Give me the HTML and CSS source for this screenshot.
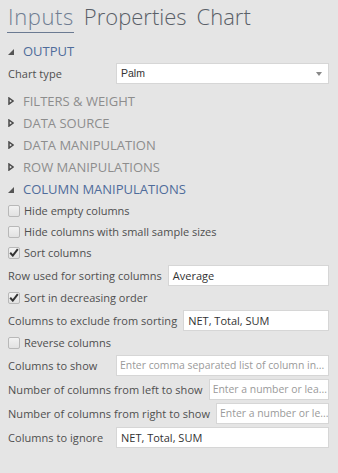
FILE: index.html
```html
<!DOCTYPE html>
<html>
<head>
<meta charset="utf-8">
<link rel="stylesheet" href="styles.css">
</head>
<body>
<div class="panel">
  <div class="tabs">
    <span class="tab active">Inputs</span>
    <span class="tab">Properties</span>
    <span class="tab">Chart</span>
  </div>

  <div class="section-head open">
    <svg class="tri" width="6" height="6" viewBox="0 0 6 6"><polygon points="6,0 6,6 0,6" fill="#555"/></svg>
    <span>OUTPUT</span>
  </div>
  <div class="form-row chart-row">
    <label class="lbl">Chart type</label>
    <div class="select"><span>Palm</span><svg class="caret" width="6" height="4" viewBox="0 0 6 4"><polygon points="0,0 6,0 3,4" fill="#888"/></svg></div>
  </div>

  <div class="section-head">
    <svg class="tri" width="6" height="8" viewBox="0 0 6 8"><polygon points="1,1 5,4 1,7" fill="none" stroke="#4a4a4a" stroke-width="1.5"/></svg>
    <span>FILTERS &amp; WEIGHT</span>
  </div>
  <div class="section-head">
    <svg class="tri" width="6" height="8" viewBox="0 0 6 8"><polygon points="1,1 5,4 1,7" fill="none" stroke="#4a4a4a" stroke-width="1.5"/></svg>
    <span>DATA SOURCE</span>
  </div>
  <div class="section-head">
    <svg class="tri" width="6" height="8" viewBox="0 0 6 8"><polygon points="1,1 5,4 1,7" fill="none" stroke="#4a4a4a" stroke-width="1.5"/></svg>
    <span>DATA MANIPULATION</span>
  </div>
  <div class="section-head">
    <svg class="tri" width="6" height="8" viewBox="0 0 6 8"><polygon points="1,1 5,4 1,7" fill="none" stroke="#4a4a4a" stroke-width="1.5"/></svg>
    <span>ROW MANIPULATIONS</span>
  </div>
  <div class="section-head open">
    <svg class="tri" width="6" height="6" viewBox="0 0 6 6"><polygon points="6,0 6,6 0,6" fill="#555"/></svg>
    <span>COLUMN MANIPULATIONS</span>
  </div>

  <div class="check-row"><span class="box"></span><span>Hide empty columns</span></div>
  <div class="check-row"><span class="box"></span><span>Hide columns with small sample sizes</span></div>
  <div class="check-row"><span class="box checked"><svg width="10" height="9" viewBox="0 0 10 9"><path d="M1.2 4.8 L3.8 7.6 L8.8 1.2" fill="none" stroke="#333" stroke-width="2"/></svg></span><span>Sort columns</span></div>
  <div class="form-row">
    <label class="lbl">Row used for sorting columns</label>
    <div class="input">Average</div>
  </div>
  <div class="check-row"><span class="box checked"><svg width="10" height="9" viewBox="0 0 10 9"><path d="M1.2 4.8 L3.8 7.6 L8.8 1.2" fill="none" stroke="#333" stroke-width="2"/></svg></span><span>Sort in decreasing order</span></div>
  <div class="form-row">
    <label class="lbl">Columns to exclude from sorting</label>
    <div class="input">NET, Total, SUM</div>
  </div>
  <div class="check-row"><span class="box"></span><span>Reverse columns</span></div>
  <div class="form-row">
    <label class="lbl">Columns to show</label>
    <div class="input ph">Enter comma separated list of column in...</div>
  </div>
  <div class="form-row">
    <label class="lbl">Number of columns from left to show</label>
    <div class="input ph">Enter a number or lea...</div>
  </div>
  <div class="form-row">
    <label class="lbl">Number of columns from right to show</label>
    <div class="input ph">Enter a number or le...</div>
  </div>
  <div class="form-row">
    <label class="lbl">Columns to ignore</label>
    <div class="input">NET, Total, SUM</div>
  </div>
</div>
</body>
</html>
```

FILE: styles.css
```css
html, body {
  margin: 0;
  padding: 0;
  background: #e5e5e5;
}
body {
  font-family: "Open Sans", "Liberation Sans", sans-serif;
  color: #4a4a4a;
}
.panel {
  padding: 0 9px 0 8px;
}
.tabs {
  display: flex;
  gap: 10px;
  height: 40px;
  align-items: flex-start;
}
.tab {
  font-size: 22px;
  font-weight: 300;
  line-height: 30px;
  color: #5a6068;
  padding-top: 1px;
}
.tab.active {
  color: #6f7d92;
  border-bottom: 1px solid #6b7a92;
  letter-spacing: 0.6px;
  margin-left: -1px;
  padding-left: 1px;
  padding-bottom: 1px;
}
.section-head {
  display: flex;
  align-items: center;
  height: 22px;
  font-size: 13px;
  color: #8d8d8d;
}
.section-head.open {
  color: #4f6c9b;
}
.section-head .tri {
  width: 6px;
  margin-right: 9px;
  flex: none;
}
.section-head.open .tri {
  margin-top: 2px;
}
.form-row {
  display: flex;
  align-items: center;
  height: 24px;
  font-size: 11px;
}
.chart-row {
  height: 28px;
  align-items: flex-start;
  padding-top: 1px;
  box-sizing: border-box;
}
.chart-row .lbl {
  line-height: 21px;
}
.lbl {
  min-width: 102px;
  margin-right: 6px;
  white-space: nowrap;
  color: #4f4f4f;
  flex: none;
  letter-spacing: 0.05px;
}
.input, .select {
  flex: 1;
  min-width: 0;
  height: 21px;
  box-sizing: border-box;
  background: #fff;
  border: 1px solid #d6d6d6;
  line-height: 19px;
  padding-left: 4px;
  color: #333;
  white-space: nowrap;
  overflow: hidden;
}
.input.ph {
  color: #9a9a9a;
  font-size: 10.4px;
  padding-left: 3px;
}
.select {
  display: flex;
  align-items: center;
  justify-content: space-between;
  font-family: "Liberation Sans", Arial, sans-serif;
  font-size: 10.5px;
  padding-right: 6px;
}
.check-row {
  display: flex;
  align-items: center;
  height: 21px;
  font-size: 11px;
  color: #4f4f4f;
}
.box {
  width: 12px;
  height: 12px;
  box-sizing: border-box;
  border: 1px solid #b8b8b8;
  border-radius: 2px;
  background: linear-gradient(#f2f2f2, #e2e2e2);
  margin-right: 4px;
  display: flex;
  align-items: center;
  justify-content: center;
  flex: none;
}
```
